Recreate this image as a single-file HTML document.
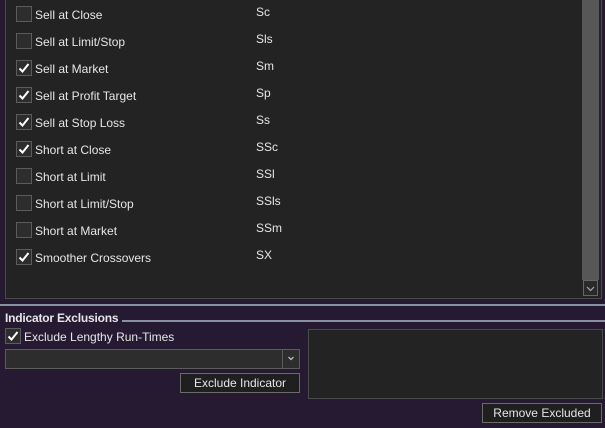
<!DOCTYPE html>
<html><head><style>
body{margin:0;width:605px;height:428px;background:#261a33;font-family:"Liberation Sans",sans-serif;color:#e6e6e6;position:relative;overflow:hidden;font-size:12px}
.abs{position:absolute}
.panel{left:5px;top:-2px;width:595px;height:299px;background:#232323;border:1px solid #4a4a4a}
.cb{position:absolute;width:14px;height:14px;border:1px solid #5c5c5c;background:#2d2d2d}
.cb svg{position:absolute;left:1px;top:1px}
.lbl{position:absolute;white-space:nowrap}
.btn{position:absolute;background:#1f1f1f;border:1px solid #6a6a6a;text-align:center;color:#e6e6e6}
</style></head><body>
<div class="abs panel"></div>
<div class="abs" style="left:582px;top:0;width:17px;height:280px;background:#575757"></div>
<div class="abs" style="left:583px;top:280px;width:15px;height:16px;border:1px solid #666;background:#2a2a2a;box-sizing:border-box"><svg width="15" height="16" style="position:absolute;left:-1px;top:-1px"><path d="M4 7 L7.5 10.5 L11 7" stroke="#aaa" fill="none" stroke-width="1.2"/></svg></div>

<div class="cb" style="left:16px;top:6px"></div><div class="lbl" style="left:35px;top:8px">Sell at Close</div><div class="lbl" style="left:256px;top:5px">Sc</div>
<div class="cb" style="left:16px;top:33px"></div><div class="lbl" style="left:35px;top:35px">Sell at Limit/Stop</div><div class="lbl" style="left:256px;top:32px">Sls</div>
<div class="cb" style="left:16px;top:60px"><svg width="12" height="12"><path d="M1.5 6.5 L4.5 9.5 L10.5 2" stroke="#fff" fill="none" stroke-width="2"/></svg></div><div class="lbl" style="left:35px;top:62px">Sell at Market</div><div class="lbl" style="left:256px;top:59px">Sm</div>
<div class="cb" style="left:16px;top:87px"><svg width="12" height="12"><path d="M1.5 6.5 L4.5 9.5 L10.5 2" stroke="#fff" fill="none" stroke-width="2"/></svg></div><div class="lbl" style="left:35px;top:89px">Sell at Profit Target</div><div class="lbl" style="left:256px;top:86px">Sp</div>
<div class="cb" style="left:16px;top:114px"><svg width="12" height="12"><path d="M1.5 6.5 L4.5 9.5 L10.5 2" stroke="#fff" fill="none" stroke-width="2"/></svg></div><div class="lbl" style="left:35px;top:116px">Sell at Stop Loss</div><div class="lbl" style="left:256px;top:113px">Ss</div>
<div class="cb" style="left:16px;top:141px"><svg width="12" height="12"><path d="M1.5 6.5 L4.5 9.5 L10.5 2" stroke="#fff" fill="none" stroke-width="2"/></svg></div><div class="lbl" style="left:35px;top:143px">Short at Close</div><div class="lbl" style="left:256px;top:140px">SSc</div>
<div class="cb" style="left:16px;top:168px"></div><div class="lbl" style="left:35px;top:170px">Short at Limit</div><div class="lbl" style="left:256px;top:167px">SSl</div>
<div class="cb" style="left:16px;top:195px"></div><div class="lbl" style="left:35px;top:197px">Short at Limit/Stop</div><div class="lbl" style="left:256px;top:194px">SSls</div>
<div class="cb" style="left:16px;top:222px"></div><div class="lbl" style="left:35px;top:224px">Short at Market</div><div class="lbl" style="left:256px;top:221px">SSm</div>
<div class="cb" style="left:16px;top:249px"><svg width="12" height="12"><path d="M1.5 6.5 L4.5 9.5 L10.5 2" stroke="#fff" fill="none" stroke-width="2"/></svg></div><div class="lbl" style="left:35px;top:251px">Smoother Crossovers</div><div class="lbl" style="left:256px;top:248px">SX</div>

<div class="abs" style="left:0;top:304px;width:605px;height:2px;background:#8890a4"></div>
<div class="abs" style="left:118px;top:320px;width:487px;height:2px;background:#8890a4"></div>
<div class="lbl" style="left:5px;top:311px;font-weight:bold;background:#261a33;padding-right:4px;letter-spacing:-0.2px">Indicator Exclusions</div>

<div class="cb" style="left:5px;top:328px"><svg width="12" height="12"><path d="M1.5 6.5 L4.5 9.5 L10.5 2" stroke="#fff" fill="none" stroke-width="2"/></svg></div>
<div class="lbl" style="left:24px;top:330px">Exclude Lengthy Run-Times</div>
<div class="abs" style="left:5px;top:349px;width:293px;height:18px;background:#2d2d2d;border:1px solid #5c5c5c"></div>
<div class="abs" style="left:282px;top:350px;width:1px;height:18px;background:#5c5c5c"></div>
<svg class="abs" style="left:284px;top:352px" width="14" height="12"><path d="M4.5 5 L7 7.5 L9.5 5" stroke="#ccc" fill="none" stroke-width="1.2"/></svg>
<div class="btn" style="left:180px;top:373px;width:118px;height:18px;line-height:18px">Exclude Indicator</div>
<div class="abs" style="left:308px;top:329px;width:293px;height:68px;background:#232323;border:1px solid #4a4a4a"></div>
<div class="btn" style="left:482px;top:403px;width:118px;height:18px;line-height:18px">Remove Excluded</div>
</body></html>
